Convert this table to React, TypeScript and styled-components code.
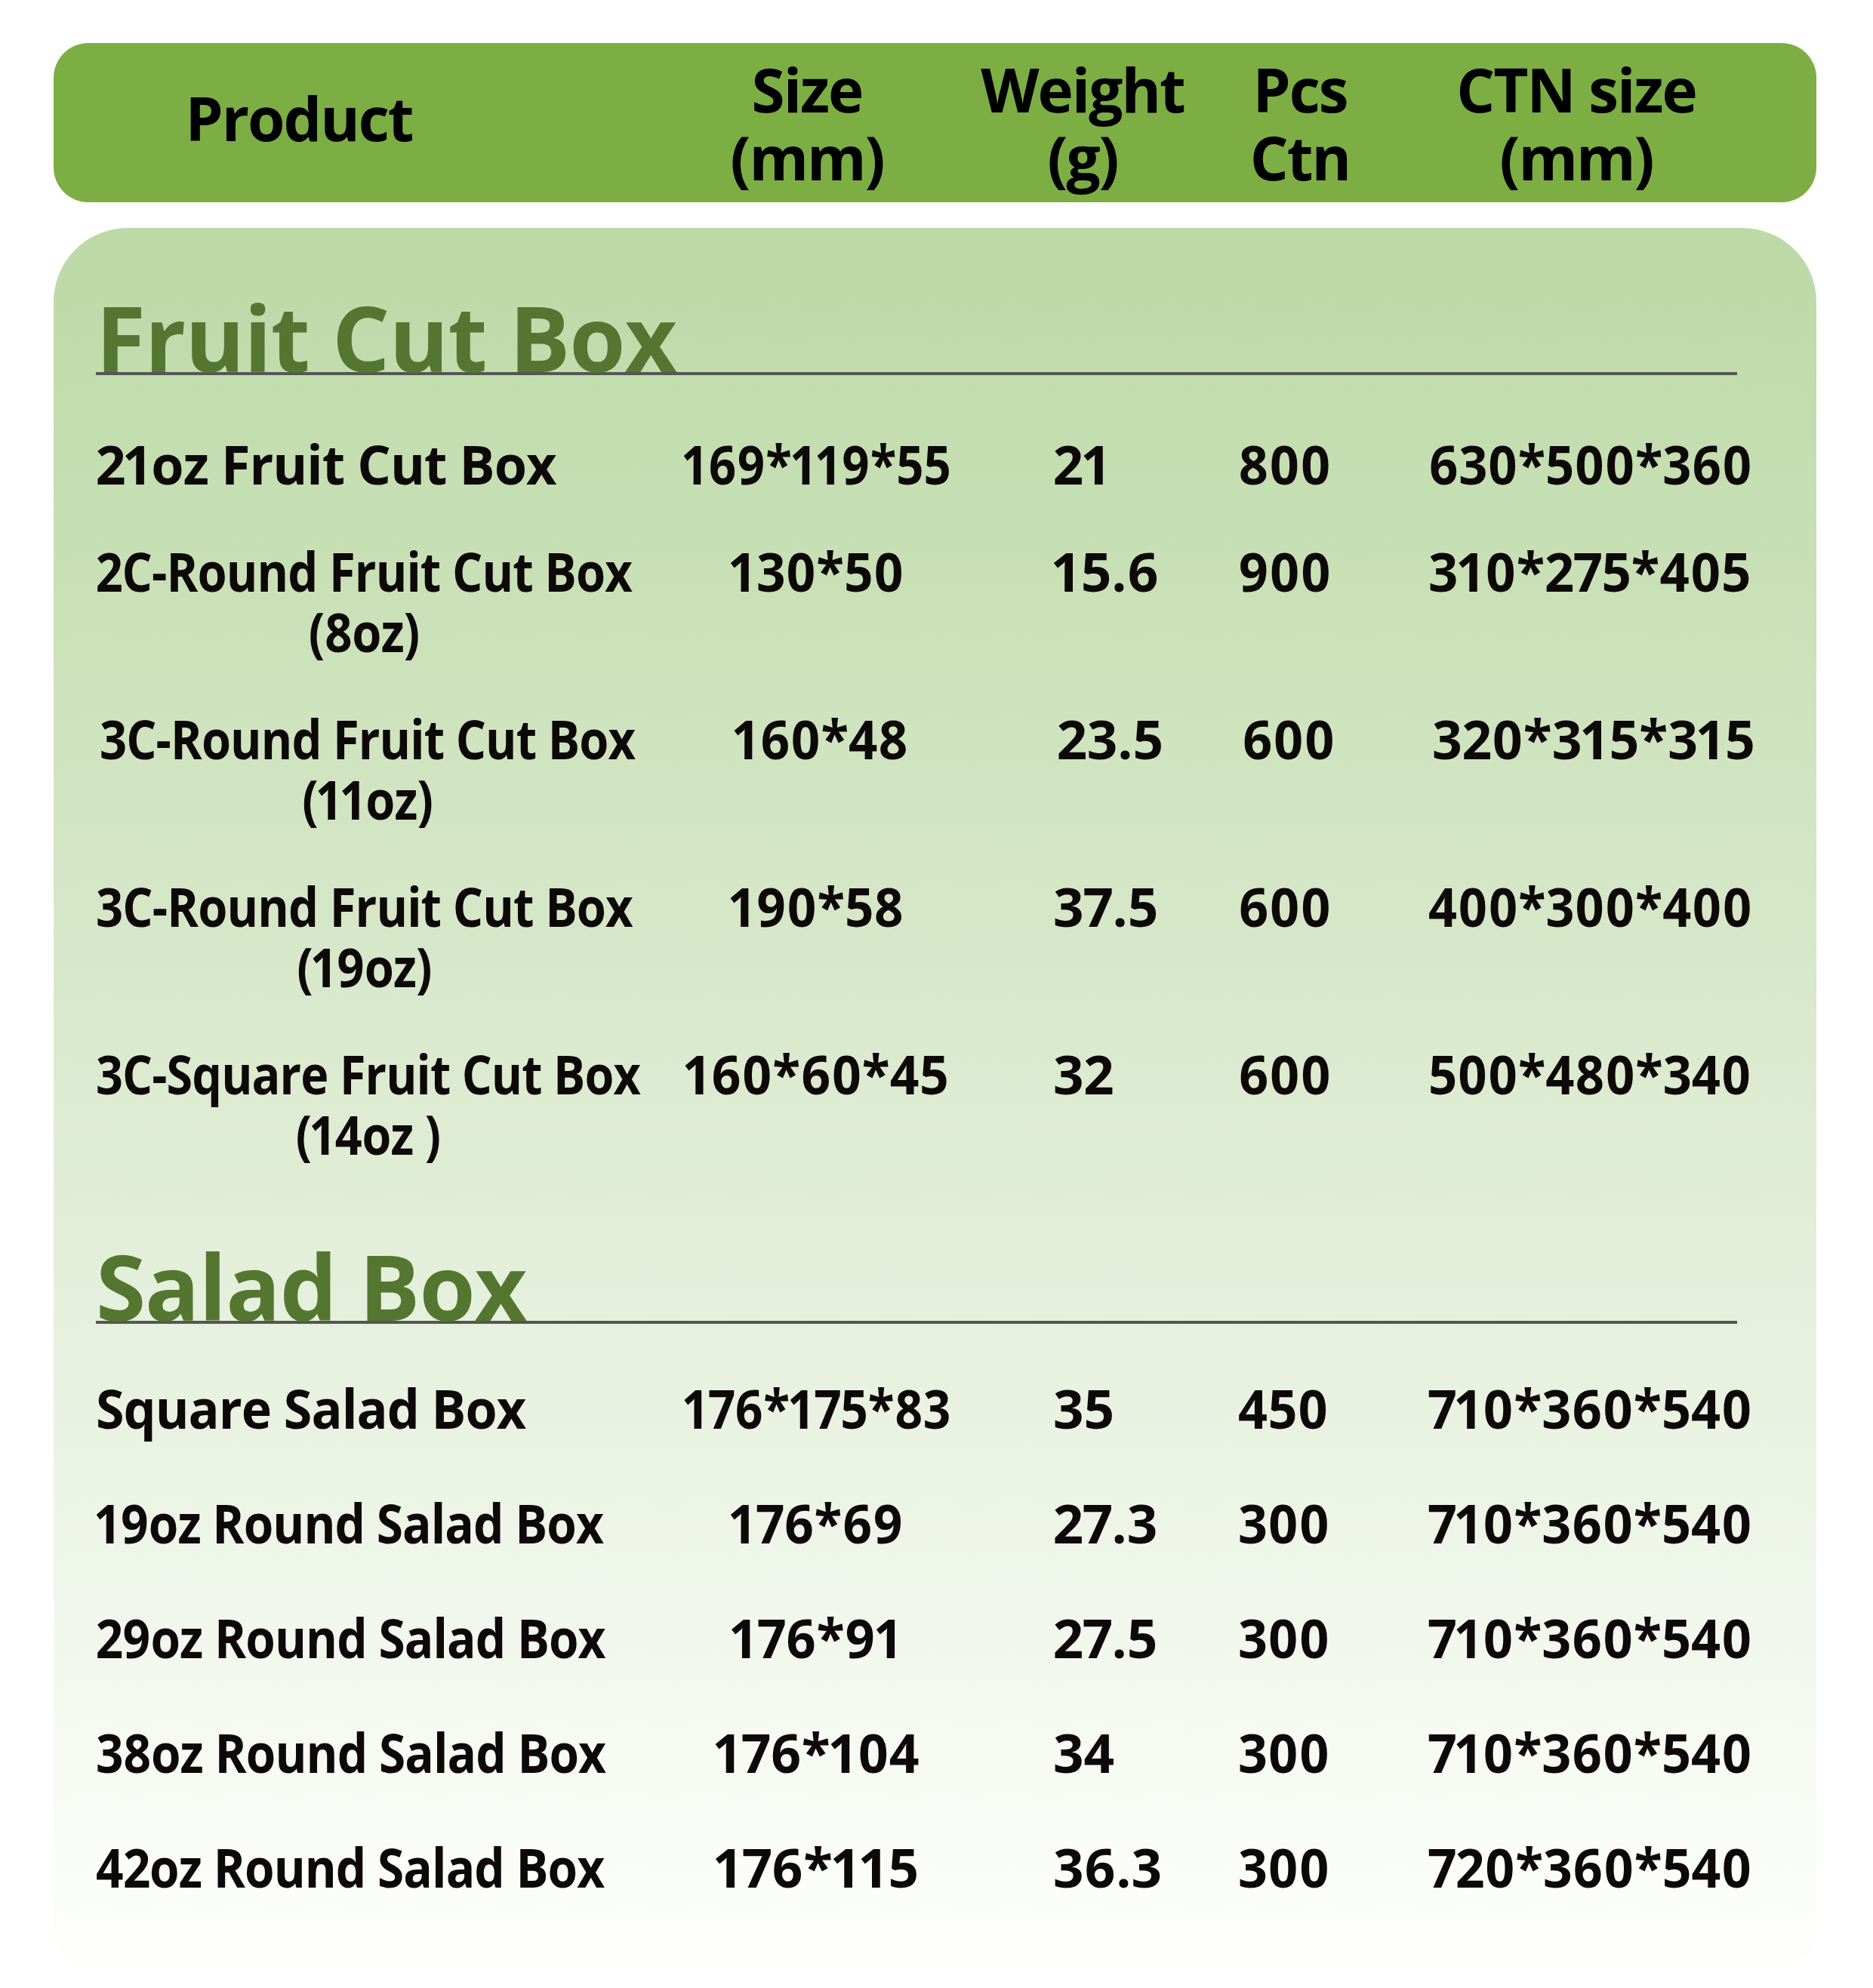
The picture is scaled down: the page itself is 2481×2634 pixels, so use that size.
import React from "react";
import styled, { createGlobalStyle } from "styled-components";

const GlobalStyle = createGlobalStyle`
  html, body {
    margin: 0;
    padding: 0;
    background: #ffffff;
  }
  body {
    font-family: "Open Sans", "Noto Sans", "Liberation Sans", sans-serif;
    color: #0d0908;
  }
`;

const Page = styled.div`
  width: 2481px;
  box-sizing: border-box;
  padding: 57px 75px 34px 71px;
  display: flex;
  flex-direction: column;
  gap: 34px;
`;

const HeaderBar = styled.div`
  width: 2335px;
  height: 211px;
  box-sizing: border-box;
  background: #7cae44;
  border-radius: 46px;
  display: flex;
  align-items: center;
  padding-left: 125px;
`;

const HeadCell = styled.div<{ $w: number; $ml: number; $raise?: number }>`
  flex: 0 0 ${(p) => p.$w}px;
  margin-left: ${(p) => p.$ml}px;
  padding-bottom: ${(p) => p.$raise ?? 0}px;
  text-align: center;
  font-size: 80px;
  line-height: 90px;
  font-weight: 700;
  letter-spacing: -2px;
  color: #000000;
  white-space: nowrap;
`;

const Panel = styled.div`
  width: 2335px;
  box-sizing: border-box;
  padding: 98px 105px 88px 56px;
  border-radius: 98px 98px 40px 40px;
  background: linear-gradient(180deg, #bcd9a6 0%, #d6e7c8 40%, #eef5e8 75%, #fefffd 100%);
  display: flex;
  flex-direction: column;
  gap: 114px;
`;

const Section = styled.section<{ $gap: number }>`
  display: flex;
  flex-direction: column;
  gap: ${(p) => p.$gap}px;
`;

const SectionTitle = styled.h2<{ $after: number }>`
  margin: 0 0 ${(p) => p.$after}px 0;
  font-size: 120px;
  line-height: 93px;
  height: 93px;
  font-weight: 700;
  letter-spacing: -1px;
  color: #547631;
  border-bottom: 4px solid #545754;
  white-space: nowrap;
`;

const Row = styled.div<{ $shift?: number }>`
  display: grid;
  grid-template-columns: 642px 626px 245px 252px 1fr;
  padding-left: ${(p) => p.$shift ?? 0}px;
  font-size: 71px;
  line-height: 80px;
  font-weight: 700;
  color: #0d0908;
  white-space: nowrap;
  font-variant-numeric: proportional-nums;
`;

const Cell = styled.div<{ $align: "left" | "center" }>`
  text-align: ${(p) => p.$align};
`;

const Fit = styled.span<{ $sx: number; $origin: "left" | "center" }>`
  display: inline-block;
  transform: scaleX(${(p) => p.$sx});
  transform-origin: ${(p) => p.$origin} center;
`;

const ProductName = styled(Fit)`
  text-align: center;
  letter-spacing: -1px;
`;

const Line = styled.span`
  display: block;
`;

type Item = {
  name: string[];
  size: string;
  weight: string;
  pcs: string;
  ctn: string;
  shift?: number;
  fx: [number, number, number, number];
};

const fruit: Item[] = [
  { name: ["21oz Fruit Cut Box"], size: "169*119*55", weight: "21", pcs: "800", ctn: "630*500*360", fx: [0.986, 0.894, 0.96, 0.94] },
  { name: ["2C-Round Fruit Cut Box", "(8oz)"], size: "130*50", weight: "15.6", pcs: "900", ctn: "310*275*405", fx: [0.892, 0.95, 0.96, 0.97] },
  { name: ["3C-Round Fruit Cut Box", "(11oz)"], size: "160*48", weight: "23.5", pcs: "600", ctn: "320*315*315", shift: 5, fx: [0.89, 0.945, 0.96, 0.98] },
  { name: ["3C-Round Fruit Cut Box", "(19oz)"], size: "190*58", weight: "37.5", pcs: "600", ctn: "400*300*400", fx: [0.892, 0.945, 0.96, 0.937] },
  { name: ["3C-Square Fruit Cut Box", "(14oz )"], size: "160*60*45", weight: "32", pcs: "600", ctn: "500*480*340", fx: [0.885, 0.953, 0.96, 0.94] },
];

const salad: Item[] = [
  { name: ["Square Salad Box"], size: "176*175*83", weight: "35", pcs: "450", ctn: "710*360*540", fx: [0.96, 0.9, 0.96, 0.962] },
  { name: ["19oz Round Salad Box"], size: "176*69", weight: "27.3", pcs: "300", ctn: "710*360*540", fx: [0.9, 0.95, 0.96, 0.962] },
  { name: ["29oz Round Salad Box"], size: "176*91", weight: "27.5", pcs: "300", ctn: "710*360*540", fx: [0.9, 0.964, 0.96, 0.962] },
  { name: ["38oz Round Salad Box"], size: "176*104", weight: "34", pcs: "300", ctn: "710*360*540", fx: [0.9, 0.98, 0.96, 0.962] },
  { name: ["42oz Round Salad Box"], size: "176*115", weight: "36.3", pcs: "300", ctn: "720*360*540", fx: [0.9, 1, 0.96, 0.955] },
];

const ProductRow: React.FC<{ item: Item }> = ({ item }) => {
  const [fName, fSize, fPcs, fCtn] = item.fx;
  return (
    <Row $shift={item.shift}>
      <Cell $align="left">
        <ProductName $sx={fName} $origin="left">
          {item.name.map((l) => (
            <Line key={l}>{l}</Line>
          ))}
        </ProductName>
      </Cell>
      <Cell $align="center">
        <Fit $sx={fSize} $origin="center">{item.size}</Fit>
      </Cell>
      <Cell $align="left">{item.weight}</Cell>
      <Cell $align="left">
        <Fit $sx={fPcs} $origin="left">{item.pcs}</Fit>
      </Cell>
      <Cell $align="left">
        <Fit $sx={fCtn} $origin="left">{item.ctn}</Fit>
      </Cell>
    </Row>
  );
};

export default function App() {
  return (
    <>
      <GlobalStyle />
      <Page>
        <HeaderBar>
          <HeadCell $w={400} $ml={0} $raise={13}>
            Product
          </HeadCell>
          <HeadCell $w={260} $ml={343}>
            Size
            <br />
            (mm)
          </HeadCell>
          <HeadCell $w={290} $ml={90}>
            Weight
            <br />
            (g)
          </HeadCell>
          <HeadCell $w={200} $ml={43}>
            Pcs
            <br />
            Ctn
          </HeadCell>
          <HeadCell $w={340} $ml={96}>
            CTN size
            <br />
            (mm)
          </HeadCell>
        </HeaderBar>
        <Panel>
          <Section $gap={62}>
            <SectionTitle $after={16}>Fruit Cut Box</SectionTitle>
            {fruit.map((it) => (
              <ProductRow key={it.name.join(" ")} item={it} />
            ))}
          </Section>
          <Section $gap={72}>
            <SectionTitle $after={0}>Salad Box</SectionTitle>
            {salad.map((it) => (
              <ProductRow key={it.name.join(" ")} item={it} />
            ))}
          </Section>
        </Panel>
      </Page>
    </>
  );
}
